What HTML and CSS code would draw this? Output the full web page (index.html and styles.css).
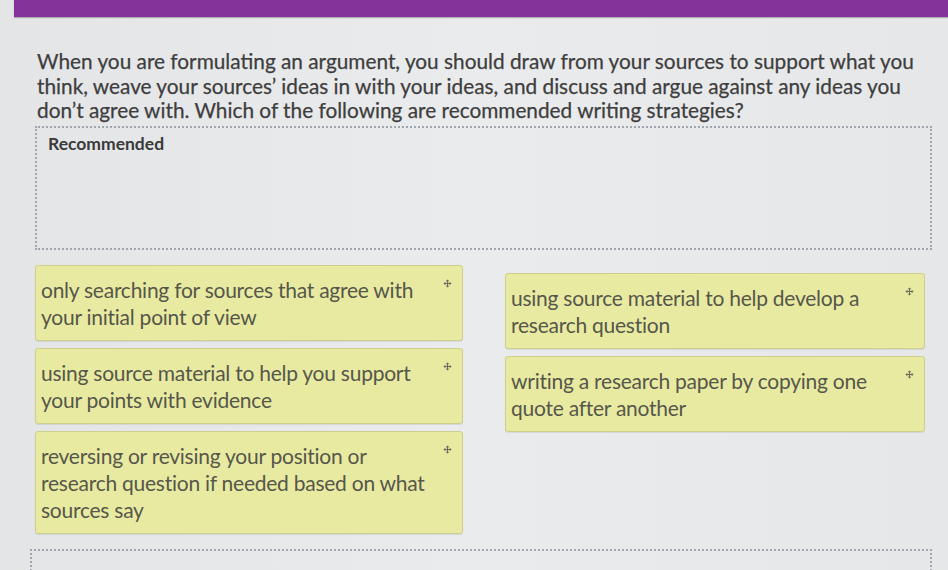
FILE: index.html
```html
<!DOCTYPE html>
<html lang="en">
<head>
<meta charset="utf-8">
<title>Recommended writing strategies</title>
<link rel="stylesheet" href="styles.css">
</head>
<body>
<div class="topbar"></div>
<p class="question">When you are formulating an argument, you should draw from your sources to support what you think, weave your sources’ ideas in with your ideas, and discuss and argue against any ideas you don’t agree with. Which of the following are recommended writing strategies?</p>
<div class="dropzone">
  <div class="zone-label">Recommended</div>
</div>
<div class="cards">
  <div class="col">
    <div class="card"><span class="card-text">only searching for sources that agree with your initial point of view</span><svg class="move" viewBox="0 0 10 10"><path d="M5 0.5 L7 2.6 H5.6 V4.4 H7.4 V3 L9.5 5 L7.4 7 V5.6 H5.6 V7.4 H7 L5 9.5 L3 7.4 H4.4 V5.6 H2.6 V7 L0.5 5 L2.6 3 V4.4 H4.4 V2.6 H3 Z"/></svg></div>
    <div class="card"><span class="card-text">using source material to help you support your points with evidence</span><svg class="move" viewBox="0 0 10 10"><path d="M5 0.5 L7 2.6 H5.6 V4.4 H7.4 V3 L9.5 5 L7.4 7 V5.6 H5.6 V7.4 H7 L5 9.5 L3 7.4 H4.4 V5.6 H2.6 V7 L0.5 5 L2.6 3 V4.4 H4.4 V2.6 H3 Z"/></svg></div>
    <div class="card"><span class="card-text">reversing or revising your position or research question if needed based on what sources say</span><svg class="move" viewBox="0 0 10 10"><path d="M5 0.5 L7 2.6 H5.6 V4.4 H7.4 V3 L9.5 5 L7.4 7 V5.6 H5.6 V7.4 H7 L5 9.5 L3 7.4 H4.4 V5.6 H2.6 V7 L0.5 5 L2.6 3 V4.4 H4.4 V2.6 H3 Z"/></svg></div>
  </div>
  <div class="col col-right">
    <div class="card"><span class="card-text">using source material to help develop a research question</span><svg class="move" viewBox="0 0 10 10"><path d="M5 0.5 L7 2.6 H5.6 V4.4 H7.4 V3 L9.5 5 L7.4 7 V5.6 H5.6 V7.4 H7 L5 9.5 L3 7.4 H4.4 V5.6 H2.6 V7 L0.5 5 L2.6 3 V4.4 H4.4 V2.6 H3 Z"/></svg></div>
    <div class="card"><span class="card-text">writing a research paper by copying one quote after another</span><svg class="move" viewBox="0 0 10 10"><path d="M5 0.5 L7 2.6 H5.6 V4.4 H7.4 V3 L9.5 5 L7.4 7 V5.6 H5.6 V7.4 H7 L5 9.5 L3 7.4 H4.4 V5.6 H2.6 V7 L0.5 5 L2.6 3 V4.4 H4.4 V2.6 H3 Z"/></svg></div>
  </div>
</div>
<div class="dropzone dropzone-bottom"></div>
</body>
</html>
```
FILE: styles.css
```css
html, body {
  margin: 0;
  padding: 0;
}
body {
  width: 948px;
  height: 570px;
  overflow: hidden;
  background: linear-gradient(90deg, #e4e5e7 0%, #eaebec 50%, #e6e7e9 100%);
  font-family: "Lato", "Liberation Sans", sans-serif;
  color: #474747;
}
.topbar {
  margin-left: 14px;
  height: 17px;
  background: #83339a;
  box-shadow: 0 1px 1px rgba(0,0,0,0.25);
}
.question {
  margin: 32px 20px 0 37px;
  font-size: 20.8px;
  line-height: 24.5px;
  color: #3e3e3e;
  -webkit-text-stroke: 0.25px #3e3e3e;
}
.dropzone {
  margin: 3px 0 0 35px;
  width: 893px;
  height: 120px;
  border: 2px dotted #a0a6b0;
}
.zone-label {
  padding: 5px 11px;
  font-size: 17.5px;
  font-weight: 700;
  color: #3a3a3a;
}
.cards {
  display: flex;
  gap: 42px;
  margin: 15px 0 0 35px;
}
.col {
  display: flex;
  flex-direction: column;
  gap: 7px;
}
.col:first-child {
  width: 428px;
}
.col-right {
  width: 420px;
  padding-top: 8px;
}
.card {
  display: flex;
  align-items: flex-start;
  background: #e8eaa2;
  border: 1px solid #cdd08c;
  border-radius: 3px;
  padding: 10px 10px 10px 5px;
  box-shadow: 0 1px 1px rgba(0,0,0,0.08);
}
.card-text {
  flex: 1;
  font-size: 21px;
  line-height: 27px;
  letter-spacing: -0.25px;
  color: #56574a;
  padding-right: 8px;
}
.move {
  width: 9px;
  height: 9px;
  margin-top: 3px;
  fill: #6b6b5a;
  flex: none;
}
.dropzone-bottom {
  margin-top: 15px;
  margin-left: 30px;
  width: 898px;
  height: 20px;
  border-bottom: none;
}
```
